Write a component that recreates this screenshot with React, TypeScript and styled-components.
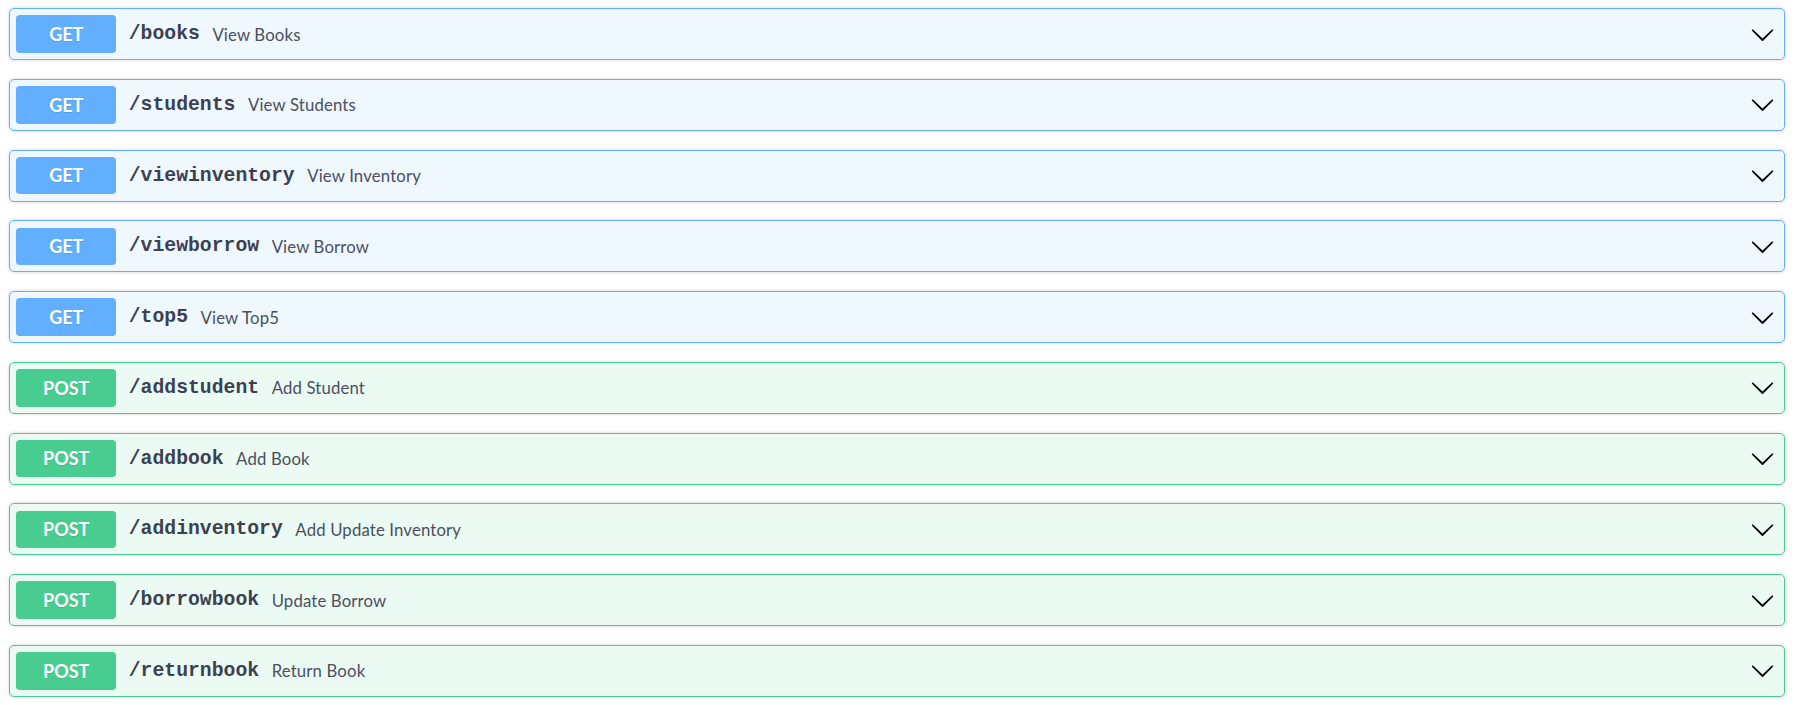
import React from "react";
import styled, { createGlobalStyle, css } from "styled-components";

type Method = "get" | "post";

const palette: Record<Method, { main: string; bg: string }> = {
  get: { main: "#61affe", bg: "rgba(97,175,254,.1)" },
  post: { main: "#49cc90", bg: "rgba(73,204,144,.1)" },
};

const GlobalStyle = createGlobalStyle`
  html, body { margin: 0; padding: 0; background: #fff; }
  body { font-family: "Lato", "Noto Sans", sans-serif; }
`;

const Page = styled.div`
  padding: 8px 9px 0 9px;
`;

const Opblock = styled.div<{ $method: Method }>`
  margin: 0 0 18.75px;
  border-radius: 5px;
  box-shadow: 0 0 3.75px rgba(0, 0, 0, 0.19);
  ${({ $method }) => css`
    border: 1px solid ${palette[$method].main};
    background: ${palette[$method].bg};
  `}
`;

const Summary = styled.div`
  display: flex;
  align-items: center;
  padding: 6.25px;
  cursor: pointer;
`;

const MethodBadge = styled.span<{ $method: Method }>`
  display: block;
  box-sizing: border-box;
  min-width: 100px;
  height: 37.5px;
  padding: 7.5px 0;
  line-height: 22.5px;
  border-radius: 3.75px;
  text-align: center;
  font-family: "Lato", "Noto Sans", sans-serif;
  font-size: 18px;
  font-weight: 700;
  color: #fff;
  text-shadow: 0 1px 0 rgba(0, 0, 0, 0.1);
  background: ${({ $method }) => palette[$method].main};
`;

const Path = styled.span`
  display: flex;
  align-items: center;
  padding: 0 12.5px;
  font-family: "Courier New", "Nimbus Mono PS", "Nimbus Mono L", "FreeMono", "Liberation Mono", monospace;
  font-size: 19.75px;
  font-weight: 700;
  color: #3b4151;
`;

const Description = styled.div`
  flex: 1;
  font-family: "Lato", "Noto Sans", sans-serif;
  font-size: 16.75px;
  font-weight: 400;
  color: #4a5060;
  letter-spacing: 0.15px;
`;

const Arrow = styled.svg`
  width: 25px;
  height: 25px;
  margin-right: 3px;
  flex: none;
  fill: #000;
`;

const ops: { method: Method; path: string; desc: string }[] = [
  { method: "get", path: "/books", desc: "View Books" },
  { method: "get", path: "/students", desc: "View Students" },
  { method: "get", path: "/viewinventory", desc: "View Inventory" },
  { method: "get", path: "/viewborrow", desc: "View Borrow" },
  { method: "get", path: "/top5", desc: "View Top5" },
  { method: "post", path: "/addstudent", desc: "Add Student" },
  { method: "post", path: "/addbook", desc: "Add Book" },
  { method: "post", path: "/addinventory", desc: "Add Update Inventory" },
  { method: "post", path: "/borrowbook", desc: "Update Borrow" },
  { method: "post", path: "/returnbook", desc: "Return Book" },
];

export default function App() {
  return (
    <>
      <GlobalStyle />
      <Page>
        {ops.map((op) => (
          <Opblock key={op.path} $method={op.method}>
            <Summary>
              <MethodBadge $method={op.method}>{op.method.toUpperCase()}</MethodBadge>
              <Path>{op.path}</Path>
              <Description>{op.desc}</Description>
              <Arrow viewBox="0 0 20 20" aria-hidden="true">
                <path d="M17.418 6.109c.272-.268.709-.268.979 0s.271.701 0 .969l-7.908 7.83c-.27.268-.707.268-.979 0l-7.908-7.83c-.27-.268-.27-.701 0-.969.271-.268.709-.268.979 0L10 13.25l7.418-7.141z" />
              </Arrow>
            </Summary>
          </Opblock>
        ))}
      </Page>
    </>
  );
}
